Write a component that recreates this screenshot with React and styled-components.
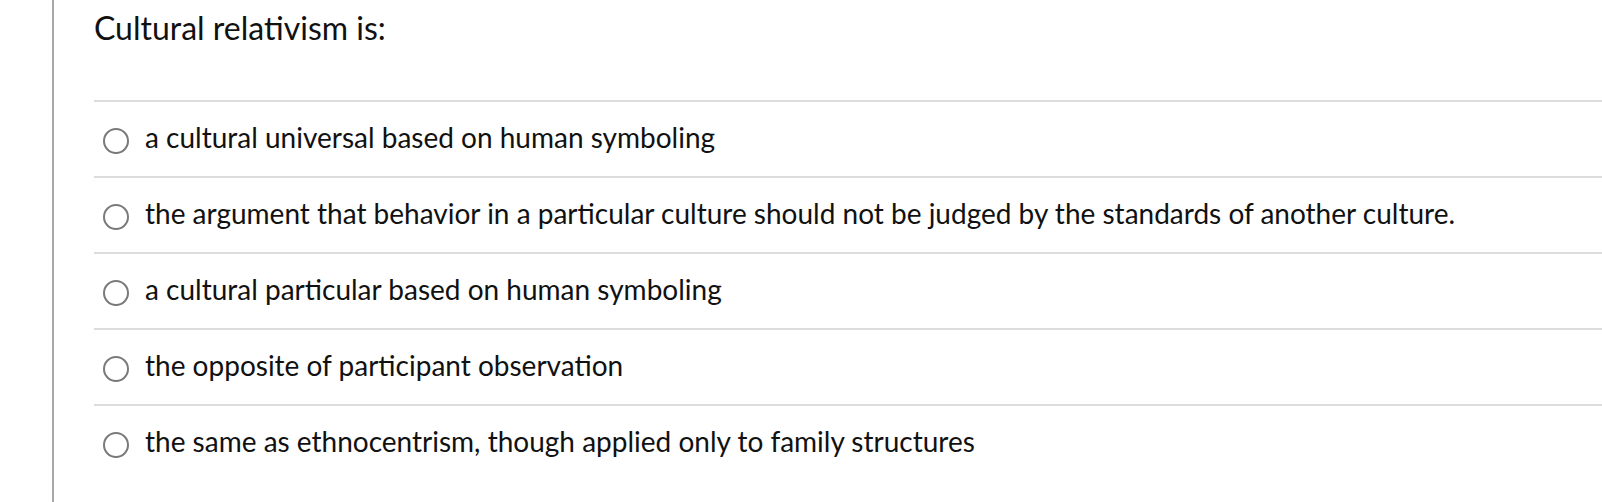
import React from 'react';
import styled, { createGlobalStyle } from 'styled-components';

const GlobalStyle = createGlobalStyle`
  html, body {
    margin: 0;
    padding: 0;
    background: #fff;
  }
  body {
    font-family: Lato, "Liberation Sans", sans-serif;
    color: #111;
  }
`;

const options = [
  'a cultural universal based on human symboling',
  'the argument that behavior in a particular culture should not be judged by the standards of another culture.',
  'a cultural particular based on human symboling',
  'the opposite of participant observation',
  'the same as ethnocentrism, though applied only to family structures',
];

const Page = styled.div`
  height: 502px;
  padding-left: 52px;
  box-sizing: border-box;
  overflow: hidden;
`;

const Question = styled.div`
  height: 100%;
  border-left: 2px solid #a8a8a8;
  padding-left: 40px;
`;

const Title = styled.div`
  font-size: 32px;
  line-height: 38px;
  padding-top: 9px;
  height: 100px;
  box-sizing: border-box;
  color: #111;
`;

const OptionList = styled.div`
  display: flex;
  flex-direction: column;
`;

const Option = styled.label`
  display: flex;
  align-items: center;
  height: 74px;
  box-sizing: content-box;
  border-top: 2px solid #dcdcdc;
  padding-left: 9px;
  font-size: 28px;
  color: #111;
`;

const OptionText = styled.span`
  margin-bottom: 4px;
`;

const Radio = styled.span`
  width: 22px;
  height: 22px;
  border: 2px solid #7a7a7a;
  border-radius: 50%;
  flex-shrink: 0;
  margin-right: 16px;
  margin-top: 4px;
`;

const App = () => {
  return (
    <Page>
      <GlobalStyle />
      <Question>
        <Title>Cultural relativism is:</Title>
        <OptionList>
          {options.map((text) => (
            <Option key={text}>
              <Radio />
              <OptionText>{text}</OptionText>
            </Option>
          ))}
        </OptionList>
      </Question>
    </Page>
  );
};

export default App;
